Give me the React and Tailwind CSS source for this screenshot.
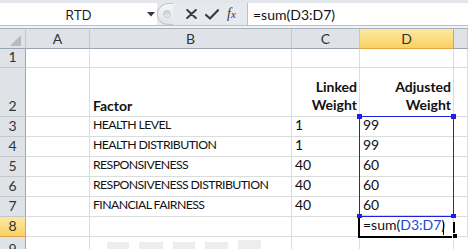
import React from "react";

const F = { fontFamily: "Lato, 'Open Sans', sans-serif" };

function ColHead({ label, selected }) {
  return (
    <div
      className={
        selected
          ? "flex items-center justify-center border-r border-b border-[#e5a443] bg-gradient-to-b from-[#fde9a2] to-[#f9d15f] text-[14px] text-[#333]"
          : "flex items-center justify-center border-r border-[#c3c8cf] border-b border-b-[#9ba5b0] bg-[#dfe3e8] text-[14px] text-[#333]"
      }
    >
      {label}
    </div>
  );
}

function RowHead({ n, selected }) {
  return (
    <div
      className={
        selected
          ? "flex items-end justify-center pb-[2px] border-r border-b border-[#e5a443] bg-gradient-to-b from-[#fde9a2] to-[#f9d15f] text-[14px] leading-[17px] text-[#333]"
          : "flex items-end justify-center pb-[2px] border-r border-r-[#9ba5b0] border-b border-[#c3c8cf] bg-[#dfe3e8] text-[14px] leading-[17px] text-[#333]"
      }
    >
      {n}
    </div>
  );
}

function Cell({ children, caps }) {
  return (
    <div
      className={
        "flex items-end overflow-visible whitespace-nowrap border-r border-b border-[#dadcdd] bg-white pl-[3px] text-[#111] " +
        (caps ? "pb-[4px] text-[12.3px] leading-[15px] tracking-[-0.6px]" : "pb-[3px] text-[14px] leading-[17px]")
      }
    >
      {children}
    </div>
  );
}

export default function App() {
  const rows = [
    { n: 3, b: "HEALTH LEVEL", c: "1", d: "99" },
    { n: 4, b: "HEALTH DISTRIBUTION", c: "1", d: "99" },
    { n: 5, b: "RESPONSIVENESS", c: "40", d: "60" },
    { n: 6, b: "RESPONSIVENESS DISTRIBUTION", c: "40", d: "60" },
    { n: 7, b: "FINANCIAL FAIRNESS", c: "40", d: "60" },
  ];
  return (
    <div className="relative h-[249px] w-[468px] overflow-hidden bg-white" style={F}>
      {/* Formula bar */}
      <div className="flex h-[29px] flex-col bg-[#e3e6ea]">
        <div className="mt-[3px] flex h-[22px]">
          <div className="relative flex w-[157px] items-center justify-center bg-white">
            <span className="text-[14px] text-[#1a1a1a]" style={{ fontFamily: "'Open Sans', 'Noto Sans', sans-serif" }}>
              RTD
            </span>
            <svg className="absolute left-[147px] top-[9px]" width="8" height="5" viewBox="0 0 8 5">
              <path d="M0 0 H8 L4 4.5 Z" fill="#3a3a3a" />
            </svg>
          </div>
          <div className="flex w-[90px] items-center bg-[#e6e9ed]">
            <div className="flex h-[22px] w-[16px] items-center justify-center rounded-l-full border-l border-y border-[#c3c8ce] bg-gradient-to-b from-[#f4f5f7] to-[#e2e5e9]">
              <div className="ml-[3px] h-[8px] w-[8px] rounded-full border border-[#c9cdd2] bg-gradient-to-b from-[#c5c9ce] to-[#eceef0]" />
            </div>
            <svg className="ml-[13px]" width="11" height="10" viewBox="0 0 11 10">
              <path d="M1.2 1 L9.8 9 M9.8 1 L1.2 9" stroke="#3c3c3c" strokeWidth="2" strokeLinecap="round" />
            </svg>
            <svg className="ml-[8px]" width="14" height="11" viewBox="0 0 14 11">
              <path d="M1 6 L5 9.5 L13 1.2" stroke="#3c3c3c" strokeWidth="2.2" fill="none" strokeLinecap="round" strokeLinejoin="round" />
            </svg>
            <span
              className="ml-[8px] text-[14px] italic leading-none text-[#3a3a3a]"
              style={{ fontFamily: "'Liberation Serif', 'DejaVu Serif', serif" }}
            >
              f<span className="text-[11px]">x</span>
            </span>
          </div>
          <div className="flex flex-1 items-center border-l border-[#b9c0c8] bg-white pl-[5px]">
            <span className="text-[14px] text-[#111]">=sum(D3:D7)</span>
          </div>
        </div>
        <div className="h-[1px] bg-[#b9c0c8]" />
        <div className="h-[2px] bg-[#f1f3f5]" />
        <div className="h-[1px] bg-[#a9b2bc]" />
      </div>

      {/* Grid */}
      <div className="relative grid h-[220px] grid-cols-[26px_64px_202px_68px_94px_1fr] grid-rows-[20px_19px_49px_20px_20px_20px_20px_20px_20px_12px]">
        <div className="relative border-r border-[#c3c8cf] border-b border-b-[#9ba5b0] bg-[#dfe3e8]">
          <svg className="absolute left-0 top-0" width="25" height="19" viewBox="0 0 25 19">
            <path d="M21 6 L21 17 L10 17 Z" fill="#b6bbc1" />
          </svg>
        </div>
        <ColHead label="A" />
        <ColHead label="B" />
        <ColHead label="C" />
        <ColHead label="D" selected />
        <ColHead label="" />

        <RowHead n={1} />
        <Cell />
        <Cell />
        <Cell />
        <Cell />
        <Cell />

        <RowHead n={2} />
        <Cell />
        <div className="flex items-end border-r border-b border-[#dadcdd] bg-white pb-[2px] pl-[3px] text-[14px] font-bold leading-[17px] text-[#111]">
          Factor
        </div>
        <div className="flex flex-col items-end justify-end border-r border-b border-[#dadcdd] bg-white pb-[2px] pr-[2px] text-[14px] font-bold leading-[18px] text-[#111]">
          <span>Linked</span>
          <span>Weight</span>
        </div>
        <div className="flex flex-col items-end justify-end border-r border-b border-[#dadcdd] bg-white pb-[2px] pr-[2px] text-[14px] font-bold leading-[18px] text-[#111]">
          <span>Adjusted</span>
          <span>Weight</span>
        </div>
        <Cell />

        {rows.map((r) => (
          <React.Fragment key={r.n}>
            <RowHead n={r.n} />
            <Cell />
            <Cell caps>{r.b}</Cell>
            <Cell>{r.c}</Cell>
            <Cell>{r.d}</Cell>
            <Cell />
          </React.Fragment>
        ))}

        <RowHead n={8} selected />
        <Cell />
        <Cell />
        <Cell />
        <div className="flex items-end border-r border-b border-[#dadcdd] bg-white pb-[3px] pl-[3px] text-[14px] leading-[17px] text-[#111]">
          <span>=sum(</span>
          <span className="text-[#2244dd]">D3:D7</span>
          <span>)</span>
        </div>
        <Cell />

        <div className="flex items-start justify-center overflow-hidden border-r border-r-[#9ba5b0] bg-[#dfe3e8] pt-[3px] text-[14px] leading-[17px] text-[#333]">
          9
        </div>
        <div className="border-r border-[#dadcdd] bg-white" />
        <div className="flex items-end gap-[10px] border-r border-[#dadcdd] bg-white pl-[17px]">
          <div className="h-[7px] w-[22px] bg-[#ededed]" />
          <div className="h-[7px] w-[24px] bg-[#ededed]" />
          <div className="h-[7px] w-[22px] bg-[#ededed]" />
          <div className="h-[7px] w-[23px] bg-[#ededed]" />
          <div className="h-[9px] w-[23px] bg-[#ededed]" />
        </div>
        <div className="border-r border-[#dadcdd] bg-white" />
        <div className="border-r border-[#dadcdd] bg-white" />
        <div className="bg-white" />

        {/* Reference range highlight */}
        <div className="pointer-events-none absolute left-[359px] top-[87px] h-[101px] w-[95px] border border-[#1f1fe0]" />
        {/* Active cell */}
        <div className="pointer-events-none absolute left-[358px] top-[186px] h-[23px] w-[97px] border-t border-b-2 border-l-2 border-t-[#f2ef1a] border-b-black border-l-black" />
        <div className="pointer-events-none absolute left-[453px] top-[193px] h-[15px] w-[2px] bg-black" />
        <div className="pointer-events-none absolute left-[452px] top-[204px] h-[6px] w-[6px] border border-white bg-black" />
        <div className="pointer-events-none absolute left-[443px] top-[193px] h-[13px] w-[1px] bg-black" />
        {/* Range corner handles */}
        <div className="pointer-events-none absolute left-[357px] top-[85px] h-[5px] w-[5px] bg-[#1f1fe0]" />
        <div className="pointer-events-none absolute left-[451px] top-[85px] h-[5px] w-[5px] bg-[#1f1fe0]" />
        <div className="pointer-events-none absolute left-[357px] top-[185px] h-[4px] w-[5px] bg-[#1f1fe0]" />
        <div className="pointer-events-none absolute left-[451px] top-[185px] h-[4px] w-[5px] bg-[#1f1fe0]" />
      </div>
    </div>
  );
}
